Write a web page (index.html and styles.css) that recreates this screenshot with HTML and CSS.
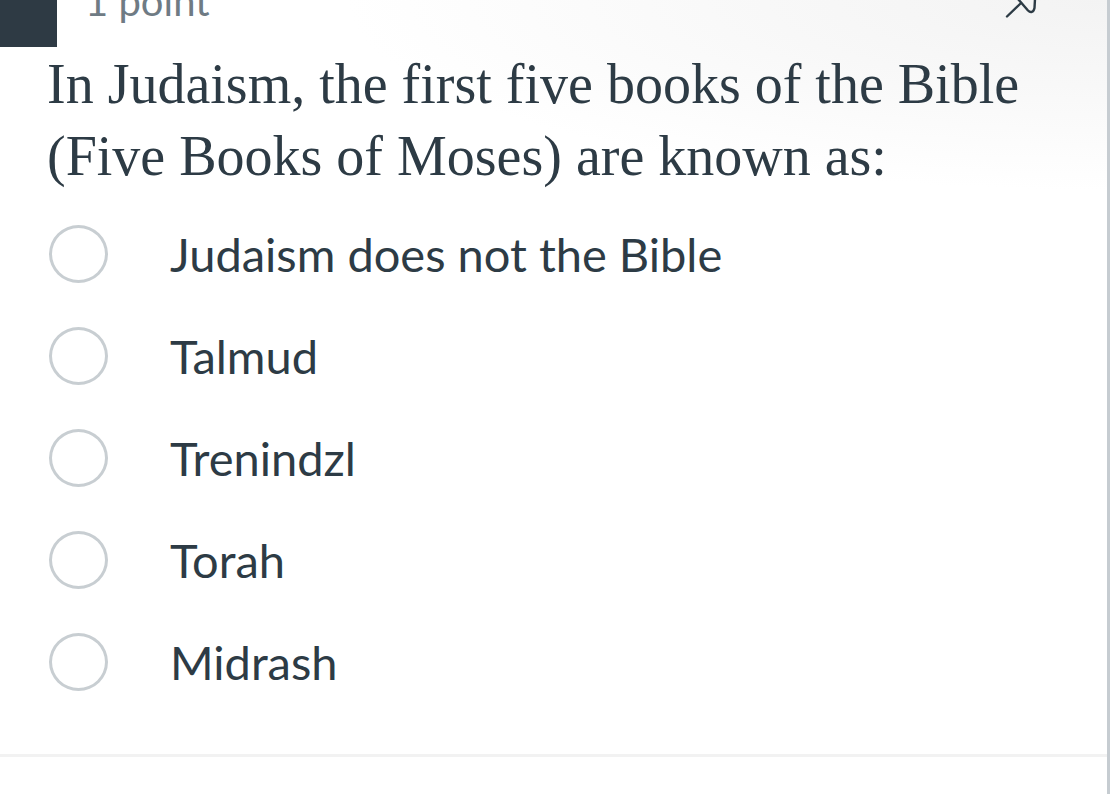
FILE: index.html
```html
<!DOCTYPE html>
<html lang="en">
<head>
<meta charset="utf-8">
<title>Quiz question</title>
<link rel="stylesheet" href="styles.css">
</head>
<body>
<div class="page">
  <div class="question-header">
    <div class="marker"></div>
    <div class="points">1 point</div>
    <svg class="flag" width="36" height="20" viewBox="0 0 36 20" aria-hidden="true">
      <path d="M4 16.5 L17 4" fill="none" stroke="#2d3b45" stroke-width="2.4" stroke-linecap="round"/>
      <path d="M15 -1 L25 10.5 C27.5 13 30.5 12.5 31.5 8 L32 -1" fill="none" stroke="#2d3b45" stroke-width="2.4" stroke-linecap="round" stroke-linejoin="round"/>
    </svg>
  </div>
  <div class="question-text">In Judaism, the first five books of the Bible (Five Books of Moses) are known as:</div>
  <ul class="answers">
    <li class="answer"><span class="radio"></span><span class="label">Judaism does not the Bible</span></li>
    <li class="answer"><span class="radio"></span><span class="label">Talmud</span></li>
    <li class="answer"><span class="radio"></span><span class="label">Trenindzl</span></li>
    <li class="answer"><span class="radio"></span><span class="label">Torah</span></li>
    <li class="answer"><span class="radio"></span><span class="label">Midrash</span></li>
  </ul>
  <div class="divider"></div>
</div>
</body>
</html>
```
FILE: styles.css
```css
html, body {
  margin: 0;
  padding: 0;
  background: #ffffff;
}
body {
  width: 1110px;
  height: 794px;
  overflow: hidden;
  font-family: "Lato", "Liberation Sans", sans-serif;
  color: #2d3b45;
}
.page {
  box-sizing: border-box;
  width: 1110px;
  height: 794px;
  border-right: 3px solid #c6ccd1;
  background:
    radial-gradient(ellipse 760px 190px at 100% 0, #f3f3f3 0%, #f8f8f8 45%, rgba(255,255,255,0) 100%),
    #ffffff;
  display: flex;
  flex-direction: column;
}
.question-header {
  display: flex;
  align-items: flex-start;
  height: 47px;
}
.marker {
  width: 57px;
  height: 47px;
  background: #2e3a44;
  flex: none;
}
.points {
  margin-left: 28px;
  margin-top: -19px;
  font-size: 40px;
  line-height: 1;
  color: #6f7b84;
}
.flag {
  margin-left: auto;
  margin-right: 68px;
  flex: none;
}
.question-text {
  margin: 1px 40px 0 47px;
  font-family: "Liberation Serif", "Times New Roman", serif;
  font-size: 56px;
  line-height: 72px;
  color: #2d3b45;
}
.answers {
  list-style: none;
  margin: 11px 0 0 0;
  padding: 0;
}
.answer {
  display: flex;
  align-items: center;
  height: 102px;
}
.radio {
  box-sizing: border-box;
  width: 59px;
  height: 58px;
  border: 3px solid #c8ced2;
  border-radius: 50%;
  margin-left: 49px;
  flex: none;
}
.label {
  margin-left: 62px;
  font-size: 47px;
  line-height: 1.2;
  color: #2d3b45;
}
.divider {
  margin-top: 41px;
  height: 3px;
  background: #f2f2f2;
}
```
